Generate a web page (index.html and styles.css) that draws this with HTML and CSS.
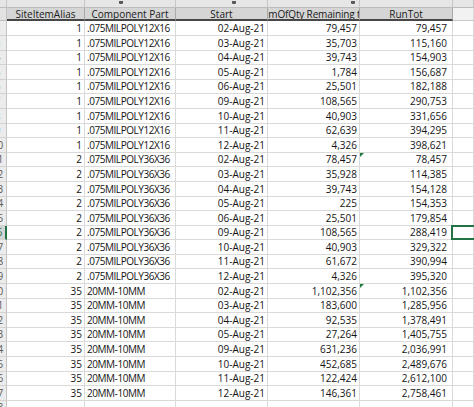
FILE: index.html
```html
<!DOCTYPE html>
<html>
<head>
<meta charset="utf-8">
<link rel="stylesheet" href="styles.css">
</head>
<body>
<div class="sheet">
  <div class="row letters">
    <div class="cell rh"></div>
    <div class="cell"></div>
    <div class="cell"><span class="mark m1"></span></div>
    <div class="cell"><span class="mark m2"></span></div>
    <div class="cell"><span class="mark m3"></span></div>
    <div class="cell"></div>
    <div class="cell"></div>
  </div>
  <div class="row head">
    <div class="cell rh"><span>1</span></div>
    <div class="cell hc"><span>SiteItemAlias</span></div>
    <div class="cell hc"><span>Component Part</span></div>
    <div class="cell hc"><span>Start</span></div>
    <div class="cell hc hd"><span>SumOfQty Remaining to</span></div>
    <div class="cell hc"><span>RunTot</span></div>
    <div class="cell hf"></div>
  </div>

  <div class="row"><div class="cell rh"><span>2</span></div><div class="cell a">1</div><div class="cell b">.075MILPOLY12X16</div><div class="cell c">02-Aug-21</div><div class="cell d">79,457</div><div class="cell e">79,457</div><div class="cell f"></div></div>
  <div class="row"><div class="cell rh"><span>3</span></div><div class="cell a">1</div><div class="cell b">.075MILPOLY12X16</div><div class="cell c">03-Aug-21</div><div class="cell d">35,703</div><div class="cell e">115,160</div><div class="cell f"></div></div>
  <div class="row"><div class="cell rh"><span>4</span></div><div class="cell a">1</div><div class="cell b">.075MILPOLY12X16</div><div class="cell c">04-Aug-21</div><div class="cell d">39,743</div><div class="cell e">154,903</div><div class="cell f"></div></div>
  <div class="row"><div class="cell rh"><span>5</span></div><div class="cell a">1</div><div class="cell b">.075MILPOLY12X16</div><div class="cell c">05-Aug-21</div><div class="cell d">1,784</div><div class="cell e">156,687</div><div class="cell f"></div></div>
  <div class="row"><div class="cell rh"><span>6</span></div><div class="cell a">1</div><div class="cell b">.075MILPOLY12X16</div><div class="cell c">06-Aug-21</div><div class="cell d">25,501</div><div class="cell e">182,188</div><div class="cell f"></div></div>
  <div class="row"><div class="cell rh"><span>7</span></div><div class="cell a">1</div><div class="cell b">.075MILPOLY12X16</div><div class="cell c">09-Aug-21</div><div class="cell d">108,565</div><div class="cell e">290,753</div><div class="cell f"></div></div>
  <div class="row"><div class="cell rh"><span>8</span></div><div class="cell a">1</div><div class="cell b">.075MILPOLY12X16</div><div class="cell c">10-Aug-21</div><div class="cell d">40,903</div><div class="cell e">331,656</div><div class="cell f"></div></div>
  <div class="row"><div class="cell rh"><span>9</span></div><div class="cell a">1</div><div class="cell b">.075MILPOLY12X16</div><div class="cell c">11-Aug-21</div><div class="cell d">62,639</div><div class="cell e">394,295</div><div class="cell f"></div></div>
  <div class="row"><div class="cell rh"><span>10</span></div><div class="cell a">1</div><div class="cell b">.075MILPOLY12X16</div><div class="cell c">12-Aug-21</div><div class="cell d">4,326</div><div class="cell e">398,621</div><div class="cell f"></div></div>

  <div class="row"><div class="cell rh"><span>11</span></div><div class="cell a">2</div><div class="cell b">.075MILPOLY36X36</div><div class="cell c">02-Aug-21</div><div class="cell d">78,457</div><div class="cell e flag">78,457</div><div class="cell f"></div></div>
  <div class="row"><div class="cell rh"><span>12</span></div><div class="cell a">2</div><div class="cell b">.075MILPOLY36X36</div><div class="cell c">03-Aug-21</div><div class="cell d">35,928</div><div class="cell e">114,385</div><div class="cell f"></div></div>
  <div class="row"><div class="cell rh"><span>13</span></div><div class="cell a">2</div><div class="cell b">.075MILPOLY36X36</div><div class="cell c">04-Aug-21</div><div class="cell d">39,743</div><div class="cell e">154,128</div><div class="cell f"></div></div>
  <div class="row"><div class="cell rh"><span>14</span></div><div class="cell a">2</div><div class="cell b">.075MILPOLY36X36</div><div class="cell c">05-Aug-21</div><div class="cell d">225</div><div class="cell e">154,353</div><div class="cell f"></div></div>
  <div class="row"><div class="cell rh"><span>15</span></div><div class="cell a">2</div><div class="cell b">.075MILPOLY36X36</div><div class="cell c">06-Aug-21</div><div class="cell d">25,501</div><div class="cell e">179,854</div><div class="cell f"></div></div>
  <div class="row"><div class="cell rh sel"><span>16</span></div><div class="cell a">2</div><div class="cell b">.075MILPOLY36X36</div><div class="cell c">09-Aug-21</div><div class="cell d">108,565</div><div class="cell e">288,419</div><div class="cell f active"></div></div>
  <div class="row"><div class="cell rh"><span>17</span></div><div class="cell a">2</div><div class="cell b">.075MILPOLY36X36</div><div class="cell c">10-Aug-21</div><div class="cell d">40,903</div><div class="cell e">329,322</div><div class="cell f"></div></div>
  <div class="row"><div class="cell rh"><span>18</span></div><div class="cell a">2</div><div class="cell b">.075MILPOLY36X36</div><div class="cell c">11-Aug-21</div><div class="cell d">61,672</div><div class="cell e">390,994</div><div class="cell f"></div></div>
  <div class="row"><div class="cell rh"><span>19</span></div><div class="cell a">2</div><div class="cell b">.075MILPOLY36X36</div><div class="cell c">12-Aug-21</div><div class="cell d">4,326</div><div class="cell e">395,320</div><div class="cell f"></div></div>

  <div class="row"><div class="cell rh"><span>20</span></div><div class="cell a">35</div><div class="cell b">20MM-10MM</div><div class="cell c">02-Aug-21</div><div class="cell d">1,102,356</div><div class="cell e flag">1,102,356</div><div class="cell f"></div></div>
  <div class="row"><div class="cell rh"><span>21</span></div><div class="cell a">35</div><div class="cell b">20MM-10MM</div><div class="cell c">03-Aug-21</div><div class="cell d">183,600</div><div class="cell e">1,285,956</div><div class="cell f"></div></div>
  <div class="row"><div class="cell rh"><span>22</span></div><div class="cell a">35</div><div class="cell b">20MM-10MM</div><div class="cell c">04-Aug-21</div><div class="cell d">92,535</div><div class="cell e">1,378,491</div><div class="cell f"></div></div>
  <div class="row"><div class="cell rh"><span>23</span></div><div class="cell a">35</div><div class="cell b">20MM-10MM</div><div class="cell c">05-Aug-21</div><div class="cell d">27,264</div><div class="cell e">1,405,755</div><div class="cell f"></div></div>
  <div class="row"><div class="cell rh"><span>24</span></div><div class="cell a">35</div><div class="cell b">20MM-10MM</div><div class="cell c">09-Aug-21</div><div class="cell d">631,236</div><div class="cell e">2,036,991</div><div class="cell f"></div></div>
  <div class="row"><div class="cell rh"><span>25</span></div><div class="cell a">35</div><div class="cell b">20MM-10MM</div><div class="cell c">10-Aug-21</div><div class="cell d">452,685</div><div class="cell e">2,489,676</div><div class="cell f"></div></div>
  <div class="row"><div class="cell rh"><span>26</span></div><div class="cell a">35</div><div class="cell b">20MM-10MM</div><div class="cell c">11-Aug-21</div><div class="cell d">122,424</div><div class="cell e">2,612,100</div><div class="cell f"></div></div>
  <div class="row"><div class="cell rh"><span>27</span></div><div class="cell a">35</div><div class="cell b">20MM-10MM</div><div class="cell c">12-Aug-21</div><div class="cell d">146,361</div><div class="cell e">2,758,461</div><div class="cell f"></div></div>
  <div class="row"><div class="cell rh"><span>28</span></div><div class="cell a"></div><div class="cell b"></div><div class="cell c"></div><div class="cell d"></div><div class="cell e"></div><div class="cell f"></div></div>
</div>
</body>
</html>
```

FILE: styles.css
```css
html, body {
  margin: 0;
  padding: 0;
  background: #ffffff;
}
body {
  font-family: "Open Sans", "Liberation Sans", sans-serif;
  font-size: 10px;
  color: #141414;
  overflow: hidden;
}
.sheet {
  width: 474px;
  height: 407px;
  overflow: hidden;
}
.row {
  display: grid;
  grid-template-columns: 7px 78px 91px 92px 92px 93px 1fr;
  height: 14.6px;
}
.cell {
  box-sizing: border-box;
  border-right: 1px solid #dadada;
  border-bottom: 1px solid #dadada;
  overflow: hidden;
  white-space: nowrap;
  display: flex;
  align-items: flex-end;
  line-height: 13px;
  padding: 0 2px;
  min-width: 0;
  position: relative;
}
.a, .c, .d { justify-content: flex-end; }
.e { justify-content: flex-end; padding-right: 5px; }
.b { padding-left: 2px; letter-spacing: -0.45px; }

.rh {
  background: #ececec;
  border-right: 1px solid #c3c3c3;
  border-bottom: 1px solid #d2d2d2;
  padding: 0;
  justify-content: flex-end;
  color: #5a5a5a;
}
.rh span {
  flex: 0 0 17px;
  text-align: center;
}
.rh.sel {
  background: #d4d4d4;
  border-right: 2px solid #217346;
  color: #217346;
}

.letters {
  height: 8px;
}
.letters .cell {
  background: #e6e6e6;
  border-right: 1px solid #c6c6c6;
  border-bottom: 1px solid #bcbcbc;
  padding: 0;
  align-items: flex-start;
}
.mark {
  display: block;
  width: 4px;
  height: 3px;
  margin-top: 1px;
  background: #5a5a5a;
  border-radius: 0 0 1px 1px;
}
.m1 { margin-left: 34px; }
.m2 { margin-left: 56px; }
.m3 { margin-left: 83px; }

.head {
  height: 13.4px;
}
.head .cell {
  align-items: center;
  line-height: 12px;
}
.head .rh {
  background: #e2e2e2;
  border-bottom: 1px solid #bcbcbc;
}
.hc {
  background: #d5d5d5;
  border-right: 1px solid #a9a9a9;
  border-bottom: 2px solid #474747;
  justify-content: center;
  color: #202020;
}
.hc span {
  flex-shrink: 0;
}
.hc.hd {
  justify-content: flex-start;
  padding: 0;
}
.hc.hd span {
  margin-left: -11px;
  letter-spacing: -0.15px;
}
.hf {
  background: #f2f2f2;
  border-bottom: 1px solid #c8c8c8;
}

.flag::before {
  content: "";
  position: absolute;
  left: 0;
  top: 0;
  border-style: solid;
  border-width: 4px 4px 0 0;
  border-color: #1e7b3e transparent transparent transparent;
}
.f.active {
  overflow: visible;
  z-index: 2;
}
.active::after {
  content: "";
  position: absolute;
  left: -2px;
  top: -1px;
  right: -4px;
  bottom: -1px;
  border: 2px solid #217346;
}
```
